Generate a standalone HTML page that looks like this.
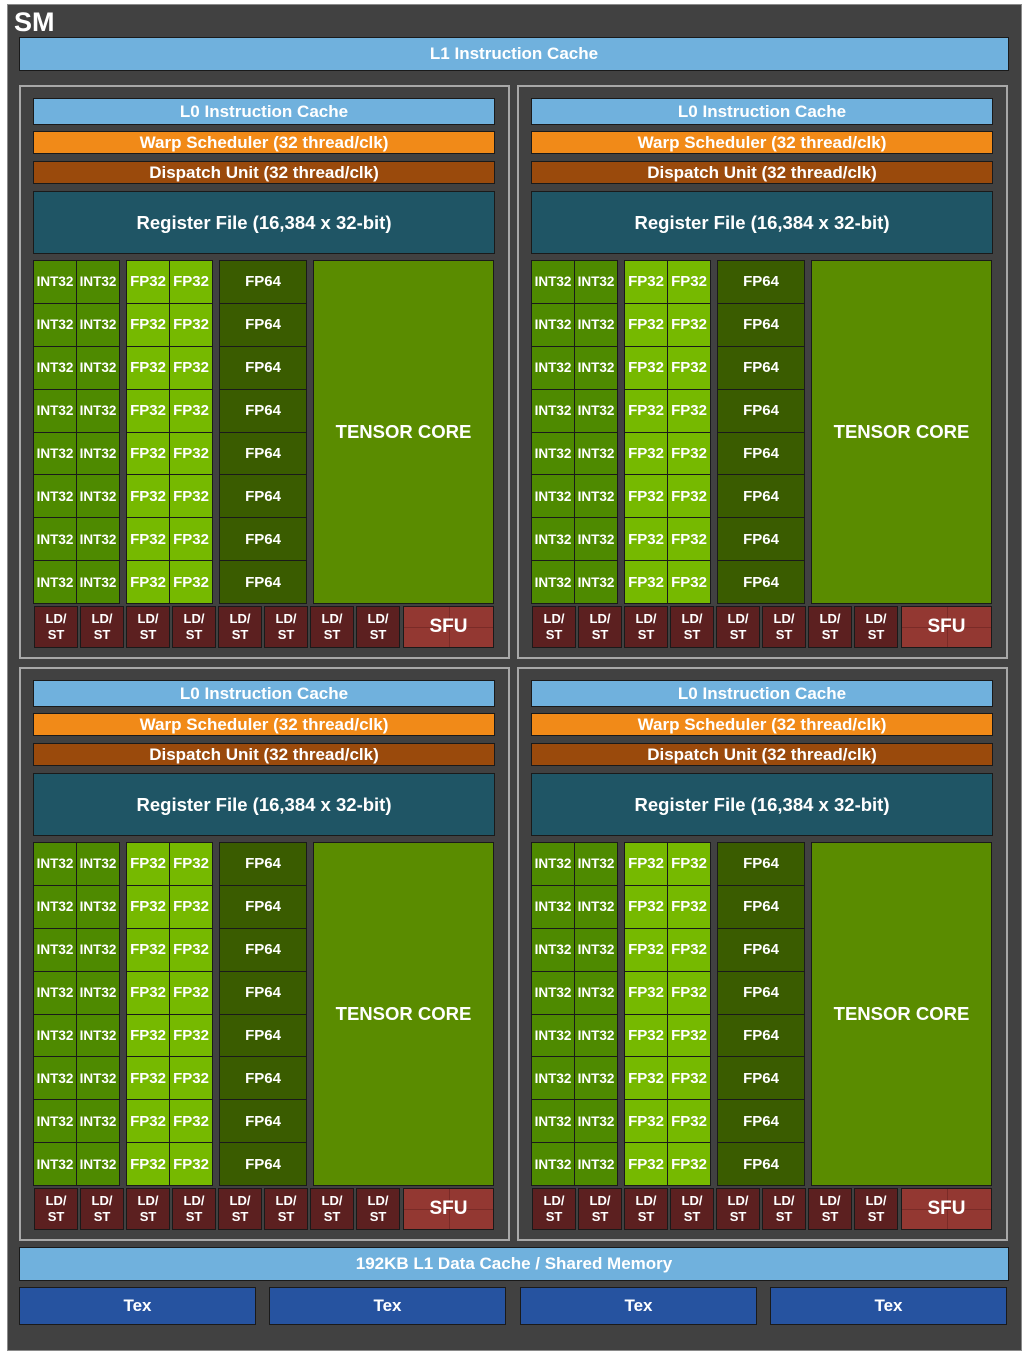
<!DOCTYPE html>
<html><head><style>
*{box-sizing:border-box;margin:0;padding:0}
body{width:1024px;height:1352px;background:#fff;position:relative;font-family:"Liberation Sans",sans-serif;font-weight:bold;color:#fff;overflow:hidden}
.sm{position:absolute;left:7px;top:4px;width:1015px;height:1347px;background:#414141;border:1px solid #8a8a8a}
.t{position:absolute;left:6px;top:2px;font-size:27px}
.bar{position:absolute;display:flex;align-items:center;justify-content:center;border:1px solid #1a1a1a}
.lb{background:#70b1dd}
.q{position:absolute;width:491px;height:574px;border:2px solid #a8a8a8;background:#414141}
.or{background:#f18a18;font-size:17px}
.dp{background:#9a4a0c;font-size:17px}
.rg{background:#1f5565;font-size:18.5px}
.g{position:absolute;top:173px;height:344px;display:grid;grid-template-rows:repeat(8,1fr);border:1px solid #1a1a1a;background:#1a1a1a;gap:1px}
.g div{display:flex;align-items:center;justify-content:center}
.i{left:12px;width:87px;grid-template-columns:1fr 1fr;font-size:13.5px}
.i div{background:#4e8a00}
.f{left:105px;width:87px;grid-template-columns:1fr 1fr;font-size:15px}
.f div{background:#76b900}
.d{left:198px;width:88px;grid-template-columns:1fr;font-size:15px}
.d div{background:#3a5c00}
.tc{position:absolute;left:292px;top:173px;width:181px;height:344px;background:#5a8c00;border:1px solid #1a1a1a;display:flex;align-items:center;justify-content:center;font-size:18.5px}
.ls{position:absolute;top:519px;width:44px;height:42px;background:#5c2020;border:1px solid #1a1a1a;font-size:13px;text-align:center;line-height:16px;padding-top:4px}
.sfu{position:absolute;left:382px;top:519px;width:91px;height:42px;background:#933832;border:1px solid #1a1a1a;display:flex;align-items:center;justify-content:center;font-size:19px}
.sfu:before{content:"";position:absolute;left:45px;top:0;bottom:0;width:1px;background:#7a2b27}
.sfu:after{content:"";position:absolute;left:0;right:0;top:20px;height:1px;background:#7a2b27}
.sfu span{position:relative;z-index:1}
.tx{background:#2653a0;top:1287px;height:38px;width:237px;font-size:17px}
</style></head><body>
<div class="sm"><div class="t">SM</div></div>
<div class="bar lb" style="left:19px;top:37px;width:990px;height:34px;font-size:17px">L1 Instruction Cache</div>

<div class="q" style="left:19px;top:85px">
<div class="bar lb" style="left:12px;top:11px;width:462px;height:27px;font-size:17px">L0 Instruction Cache</div>
<div class="bar or" style="left:12px;top:44px;width:462px;height:23px">Warp Scheduler (32 thread/clk)</div>
<div class="bar dp" style="left:12px;top:74px;width:462px;height:23px">Dispatch Unit (32 thread/clk)</div>
<div class="bar rg" style="left:12px;top:104px;width:462px;height:63px">Register File (16,384 x 32-bit)</div>
<div class="g i"><div>INT32</div><div>INT32</div><div>INT32</div><div>INT32</div><div>INT32</div><div>INT32</div><div>INT32</div><div>INT32</div><div>INT32</div><div>INT32</div><div>INT32</div><div>INT32</div><div>INT32</div><div>INT32</div><div>INT32</div><div>INT32</div></div>
<div class="g f"><div>FP32</div><div>FP32</div><div>FP32</div><div>FP32</div><div>FP32</div><div>FP32</div><div>FP32</div><div>FP32</div><div>FP32</div><div>FP32</div><div>FP32</div><div>FP32</div><div>FP32</div><div>FP32</div><div>FP32</div><div>FP32</div></div>
<div class="g d"><div>FP64</div><div>FP64</div><div>FP64</div><div>FP64</div><div>FP64</div><div>FP64</div><div>FP64</div><div>FP64</div></div>
<div class="tc">TENSOR CORE</div>
<div class="ls" style="left:13px">LD/<br>ST</div><div class="ls" style="left:59px">LD/<br>ST</div><div class="ls" style="left:105px">LD/<br>ST</div><div class="ls" style="left:151px">LD/<br>ST</div><div class="ls" style="left:197px">LD/<br>ST</div><div class="ls" style="left:243px">LD/<br>ST</div><div class="ls" style="left:289px">LD/<br>ST</div><div class="ls" style="left:335px">LD/<br>ST</div>
<div class="sfu"><span>SFU</span></div>
</div>

<div class="q" style="left:517px;top:85px">
<div class="bar lb" style="left:12px;top:11px;width:462px;height:27px;font-size:17px">L0 Instruction Cache</div>
<div class="bar or" style="left:12px;top:44px;width:462px;height:23px">Warp Scheduler (32 thread/clk)</div>
<div class="bar dp" style="left:12px;top:74px;width:462px;height:23px">Dispatch Unit (32 thread/clk)</div>
<div class="bar rg" style="left:12px;top:104px;width:462px;height:63px">Register File (16,384 x 32-bit)</div>
<div class="g i"><div>INT32</div><div>INT32</div><div>INT32</div><div>INT32</div><div>INT32</div><div>INT32</div><div>INT32</div><div>INT32</div><div>INT32</div><div>INT32</div><div>INT32</div><div>INT32</div><div>INT32</div><div>INT32</div><div>INT32</div><div>INT32</div></div>
<div class="g f"><div>FP32</div><div>FP32</div><div>FP32</div><div>FP32</div><div>FP32</div><div>FP32</div><div>FP32</div><div>FP32</div><div>FP32</div><div>FP32</div><div>FP32</div><div>FP32</div><div>FP32</div><div>FP32</div><div>FP32</div><div>FP32</div></div>
<div class="g d"><div>FP64</div><div>FP64</div><div>FP64</div><div>FP64</div><div>FP64</div><div>FP64</div><div>FP64</div><div>FP64</div></div>
<div class="tc">TENSOR CORE</div>
<div class="ls" style="left:13px">LD/<br>ST</div><div class="ls" style="left:59px">LD/<br>ST</div><div class="ls" style="left:105px">LD/<br>ST</div><div class="ls" style="left:151px">LD/<br>ST</div><div class="ls" style="left:197px">LD/<br>ST</div><div class="ls" style="left:243px">LD/<br>ST</div><div class="ls" style="left:289px">LD/<br>ST</div><div class="ls" style="left:335px">LD/<br>ST</div>
<div class="sfu"><span>SFU</span></div>
</div>

<div class="q" style="left:19px;top:667px">
<div class="bar lb" style="left:12px;top:11px;width:462px;height:27px;font-size:17px">L0 Instruction Cache</div>
<div class="bar or" style="left:12px;top:44px;width:462px;height:23px">Warp Scheduler (32 thread/clk)</div>
<div class="bar dp" style="left:12px;top:74px;width:462px;height:23px">Dispatch Unit (32 thread/clk)</div>
<div class="bar rg" style="left:12px;top:104px;width:462px;height:63px">Register File (16,384 x 32-bit)</div>
<div class="g i"><div>INT32</div><div>INT32</div><div>INT32</div><div>INT32</div><div>INT32</div><div>INT32</div><div>INT32</div><div>INT32</div><div>INT32</div><div>INT32</div><div>INT32</div><div>INT32</div><div>INT32</div><div>INT32</div><div>INT32</div><div>INT32</div></div>
<div class="g f"><div>FP32</div><div>FP32</div><div>FP32</div><div>FP32</div><div>FP32</div><div>FP32</div><div>FP32</div><div>FP32</div><div>FP32</div><div>FP32</div><div>FP32</div><div>FP32</div><div>FP32</div><div>FP32</div><div>FP32</div><div>FP32</div></div>
<div class="g d"><div>FP64</div><div>FP64</div><div>FP64</div><div>FP64</div><div>FP64</div><div>FP64</div><div>FP64</div><div>FP64</div></div>
<div class="tc">TENSOR CORE</div>
<div class="ls" style="left:13px">LD/<br>ST</div><div class="ls" style="left:59px">LD/<br>ST</div><div class="ls" style="left:105px">LD/<br>ST</div><div class="ls" style="left:151px">LD/<br>ST</div><div class="ls" style="left:197px">LD/<br>ST</div><div class="ls" style="left:243px">LD/<br>ST</div><div class="ls" style="left:289px">LD/<br>ST</div><div class="ls" style="left:335px">LD/<br>ST</div>
<div class="sfu"><span>SFU</span></div>
</div>

<div class="q" style="left:517px;top:667px">
<div class="bar lb" style="left:12px;top:11px;width:462px;height:27px;font-size:17px">L0 Instruction Cache</div>
<div class="bar or" style="left:12px;top:44px;width:462px;height:23px">Warp Scheduler (32 thread/clk)</div>
<div class="bar dp" style="left:12px;top:74px;width:462px;height:23px">Dispatch Unit (32 thread/clk)</div>
<div class="bar rg" style="left:12px;top:104px;width:462px;height:63px">Register File (16,384 x 32-bit)</div>
<div class="g i"><div>INT32</div><div>INT32</div><div>INT32</div><div>INT32</div><div>INT32</div><div>INT32</div><div>INT32</div><div>INT32</div><div>INT32</div><div>INT32</div><div>INT32</div><div>INT32</div><div>INT32</div><div>INT32</div><div>INT32</div><div>INT32</div></div>
<div class="g f"><div>FP32</div><div>FP32</div><div>FP32</div><div>FP32</div><div>FP32</div><div>FP32</div><div>FP32</div><div>FP32</div><div>FP32</div><div>FP32</div><div>FP32</div><div>FP32</div><div>FP32</div><div>FP32</div><div>FP32</div><div>FP32</div></div>
<div class="g d"><div>FP64</div><div>FP64</div><div>FP64</div><div>FP64</div><div>FP64</div><div>FP64</div><div>FP64</div><div>FP64</div></div>
<div class="tc">TENSOR CORE</div>
<div class="ls" style="left:13px">LD/<br>ST</div><div class="ls" style="left:59px">LD/<br>ST</div><div class="ls" style="left:105px">LD/<br>ST</div><div class="ls" style="left:151px">LD/<br>ST</div><div class="ls" style="left:197px">LD/<br>ST</div><div class="ls" style="left:243px">LD/<br>ST</div><div class="ls" style="left:289px">LD/<br>ST</div><div class="ls" style="left:335px">LD/<br>ST</div>
<div class="sfu"><span>SFU</span></div>
</div>

<div class="bar lb" style="left:19px;top:1247px;width:990px;height:34px;font-size:17px">192KB L1 Data Cache / Shared Memory</div>
<div class="bar tx" style="left:19px">Tex</div>
<div class="bar tx" style="left:269px">Tex</div>
<div class="bar tx" style="left:520px">Tex</div>
<div class="bar tx" style="left:770px">Tex</div>
</body></html>
